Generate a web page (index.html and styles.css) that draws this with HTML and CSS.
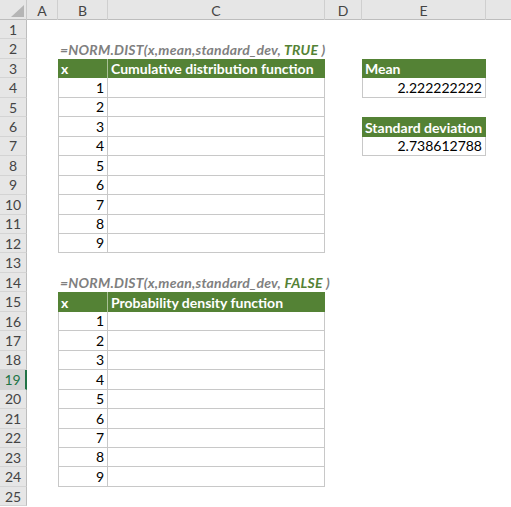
FILE: index.html
```html
<!DOCTYPE html>
<html>
<head>
<meta charset="utf-8">
<link rel="stylesheet" href="styles.css">
</head>
<body>
<div class="sheet">
  <div class="row hdr">
    <div class="corner"><svg width="27" height="20" viewBox="0 0 27 20"><polygon points="24,5 24,17 11,17" fill="#b5b5b5"/></svg></div>
    <div class="ch">A</div><div class="ch">B</div><div class="ch">C</div><div class="ch">D</div><div class="ch">E</div><div class="ch last">&nbsp;</div>
  </div>
  <div class="row"><div class="rh">1</div></div>
  <div class="row"><div class="rh">2</div><div class="b formula"><span class="ftext">=NORM.DIST(x,mean,standard_dev, <span class="kw">TRUE</span> )</span></div></div>
  <div class="row"><div class="rh">3</div><div class="b th">x</div><div class="cc th">Cumulative distribution function</div><div class="e th">Mean</div></div>
  <div class="row"><div class="rh">4</div><div class="b td num">1</div><div class="cc td"></div><div class="e td num box">2.222222222</div></div>
  <div class="row"><div class="rh">5</div><div class="b td num">2</div><div class="cc td"></div></div>
  <div class="row"><div class="rh">6</div><div class="b td num">3</div><div class="cc td"></div><div class="e th">Standard deviation</div></div>
  <div class="row"><div class="rh">7</div><div class="b td num">4</div><div class="cc td"></div><div class="e td num box">2.738612788</div></div>
  <div class="row"><div class="rh">8</div><div class="b td num">5</div><div class="cc td"></div></div>
  <div class="row"><div class="rh">9</div><div class="b td num">6</div><div class="cc td"></div></div>
  <div class="row"><div class="rh">10</div><div class="b td num">7</div><div class="cc td"></div></div>
  <div class="row"><div class="rh">11</div><div class="b td num">8</div><div class="cc td"></div></div>
  <div class="row"><div class="rh">12</div><div class="b td num">9</div><div class="cc td"></div></div>
  <div class="row"><div class="rh">13</div></div>
  <div class="row"><div class="rh">14</div><div class="b formula"><span class="ftext">=NORM.DIST(x,mean,standard_dev, <span class="kw">FALSE</span> )</span></div></div>
  <div class="row"><div class="rh">15</div><div class="b th">x</div><div class="cc th">Probability density function</div></div>
  <div class="row"><div class="rh">16</div><div class="b td num">1</div><div class="cc td"></div></div>
  <div class="row"><div class="rh">17</div><div class="b td num">2</div><div class="cc td"></div></div>
  <div class="row"><div class="rh">18</div><div class="b td num">3</div><div class="cc td"></div></div>
  <div class="row"><div class="rh sel">19</div><div class="b td num">4</div><div class="cc td"></div></div>
  <div class="row"><div class="rh">20</div><div class="b td num">5</div><div class="cc td"></div></div>
  <div class="row"><div class="rh">21</div><div class="b td num">6</div><div class="cc td"></div></div>
  <div class="row"><div class="rh">22</div><div class="b td num">7</div><div class="cc td"></div></div>
  <div class="row"><div class="rh">23</div><div class="b td num">8</div><div class="cc td"></div></div>
  <div class="row"><div class="rh">24</div><div class="b td num">9</div><div class="cc td"></div></div>
  <div class="row"><div class="rh">25</div></div>
</div>
</body>
</html>
```

FILE: styles.css
```css
html, body {
  margin: 0;
  padding: 0;
  background: #ffffff;
}
.sheet {
  width: 511px;
  height: 507px;
  overflow: hidden;
  font-family: Lato, "Open Sans", sans-serif;
  font-size: 14px;
  color: #000;
}
.row {
  display: grid;
  grid-template-columns: 27px 31px 50px 217px 37px 124px 25px;
  height: 19.46px;
}
.row.hdr {
  height: 20px;
  background: #e6e6e6;
  border-bottom: 1px solid #bdbdbd;
  box-sizing: border-box;
}
.corner {
  border-right: 1px solid #c9c9c9;
  box-sizing: border-box;
  line-height: 0;
}
.ch {
  display: flex;
  align-items: center;
  justify-content: center;
  color: #444;
  font-size: 14px;
  border-right: 1px solid #cfcfcf;
  box-sizing: border-box;
}
.ch.last { border-right: none; }
.rh {
  grid-column: 1;
  background: #e6e6e6;
  color: #444;
  display: flex;
  align-items: center;
  justify-content: center;
  border-right: 1px solid #bdbdbd;
  border-bottom: 1px solid #d4d4d4;
  box-sizing: border-box;
  font-size: 14px;
}
.rh.sel {
  background: #d3d3d3;
  color: #217346;
  border-right: 2px solid #217346;
}
.b { grid-column: 3; }
.cc { grid-column: 4; }
.e { grid-column: 6; }
.b, .cc, .e {
  box-sizing: border-box;
  display: flex;
  align-items: flex-end;
  padding: 0 3px 1px 3px;
  white-space: nowrap;
  min-width: 0;
}
.formula {
  overflow: visible;
  padding-left: 2px;
  font-style: italic;
  font-weight: 700;
  color: #7f7f7f;
}
.ftext {
  white-space: pre;
  letter-spacing: 0.22px;
}
.formula .kw {
  color: #548235;
}
.th {
  background: #548235;
  color: #fff;
  font-weight: 700;
}
.b.th {
  border-right: 1px solid #a9c196;
}
.td {
  border-bottom: 1px solid #c8c8c8;
  border-right: 1px solid #c8c8c8;
}
.b.td {
  border-left: 1px solid #c8c8c8;
}
.num {
  justify-content: flex-end;
}
.box {
  border-left: 1px solid #c8c8c8;
}
```
